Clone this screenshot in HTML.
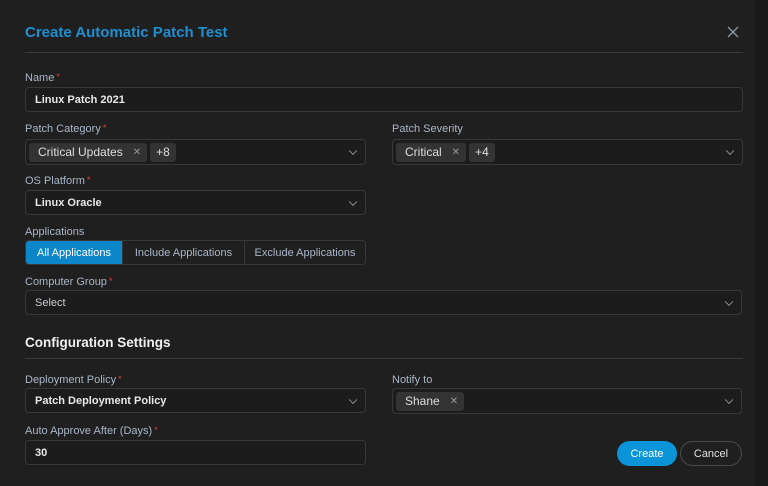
<!DOCTYPE html>
<html><head><meta charset="utf-8"><style>
*{box-sizing:border-box;margin:0;padding:0}
body{width:768px;height:486px;background:#1f1f1f;font-family:"Liberation Sans",sans-serif;position:relative;overflow:hidden}
.strip{position:absolute;left:755px;top:0;width:13px;height:486px;background:#1a1a1a}
.a{position:absolute}
.title{left:25px;top:24px;color:#1e8fd0;font-size:15px;font-weight:bold}
.hr{position:absolute;left:25px;width:718px;height:1px;background:#3a3a3a}
.lbl{position:absolute;color:#a9b6c8;font-size:11px}
.lbl b{color:#e0443e;font-weight:normal;font-size:9px;vertical-align:top;margin-left:2px}
.in{position:absolute;border:1px solid #383838;border-radius:4px;background:#1c1c1c;color:#e8e8e8;font-size:11px;padding-left:9px;display:flex;align-items:center;font-weight:bold}
.chev{position:absolute;right:9px;top:50%;width:6px;height:6px;border-right:1px solid #8a8f96;border-bottom:1px solid #8a8f96;transform:translateY(-70%) rotate(45deg)}
.tag{background:#333;border-radius:3px;color:#ddd;font-size:12px;height:19px;display:inline-flex;align-items:center;padding:0 6px 0 9px;margin-right:3px;font-weight:normal}
.tag i{font-style:normal;color:#999;font-size:10px;margin-left:10px}
.pad{padding-left:3px}
.seg{position:absolute;left:25px;top:240px;width:341px;height:25px;border:1px solid #383838;border-radius:4px;display:flex;font-size:11px;color:#a9b6c8;overflow:hidden}
.seg div{display:flex;align-items:center;justify-content:center;border-right:1px solid #383838}
.h2{left:25px;top:335px;color:#f0f0f0;font-size:13.5px;font-weight:bold}
.btn{position:absolute;top:441px;height:25px;border-radius:13px;font-size:11px;display:flex;align-items:center;justify-content:center}
</style></head><body>
<div class="strip"></div>
<div class="a title">Create Automatic Patch Test</div>
<svg class="a" style="left:727px;top:26px" width="12" height="12"><path d="M1 1L11 11M11 1L1 11" stroke="#8a96a3" stroke-width="1.4"/></svg>
<div class="hr" style="top:52px"></div>

<div class="lbl" style="left:25px;top:72px">Name<b>*</b></div>
<div class="in" style="left:25px;top:87px;width:718px;height:25px">Linux Patch 2021</div>

<div class="lbl" style="left:25px;top:123px">Patch Category<b>*</b></div>
<div class="in pad" style="left:25px;top:139px;width:341px;height:26px"><span class="tag">Critical Updates<i>✕</i></span><span class="tag" style="padding:0 6px">+8</span><span class="chev"></span></div>
<div class="lbl" style="left:392px;top:123px">Patch Severity</div>
<div class="in pad" style="left:392px;top:139px;width:351px;height:26px"><span class="tag">Critical<i>✕</i></span><span class="tag" style="padding:0 6px">+4</span><span class="chev"></span></div>

<div class="lbl" style="left:25px;top:175px">OS Platform<b>*</b></div>
<div class="in" style="left:25px;top:190px;width:341px;height:25px">Linux Oracle<span class="chev"></span></div>

<div class="lbl" style="left:25px;top:226px">Applications</div>
<div class="seg"><div style="width:97px;background:#0b87c9;color:#fff">All Applications</div><div style="width:122px">Include Applications</div><div style="flex:1;border-right:none">Exclude Applications</div></div>

<div class="lbl" style="left:25px;top:276px">Computer Group<b>*</b></div>
<div class="in" style="left:25px;top:290px;width:717px;height:25px;color:#c8ccd2;font-weight:normal">Select<span class="chev"></span></div>

<div class="a h2">Configuration Settings</div>
<div class="hr" style="top:358px"></div>

<div class="lbl" style="left:25px;top:374px">Deployment Policy<b>*</b></div>
<div class="in" style="left:25px;top:388px;width:341px;height:25px">Patch Deployment Policy<span class="chev"></span></div>
<div class="lbl" style="left:392px;top:374px">Notify to</div>
<div class="in pad" style="left:392px;top:388px;width:350px;height:26px"><span class="tag">Shane<i>✕</i></span><span class="chev"></span></div>

<div class="lbl" style="left:25px;top:425px">Auto Approve After (Days)<b>*</b></div>
<div class="in" style="left:25px;top:440px;width:341px;height:25px">30</div>

<div class="btn" style="left:617px;width:60px;background:#0b94d8;color:#fff">Create</div>
<div class="btn" style="left:680px;width:62px;border:1px solid #4a4a4a;color:#e0e0e0">Cancel</div>
</body></html>
